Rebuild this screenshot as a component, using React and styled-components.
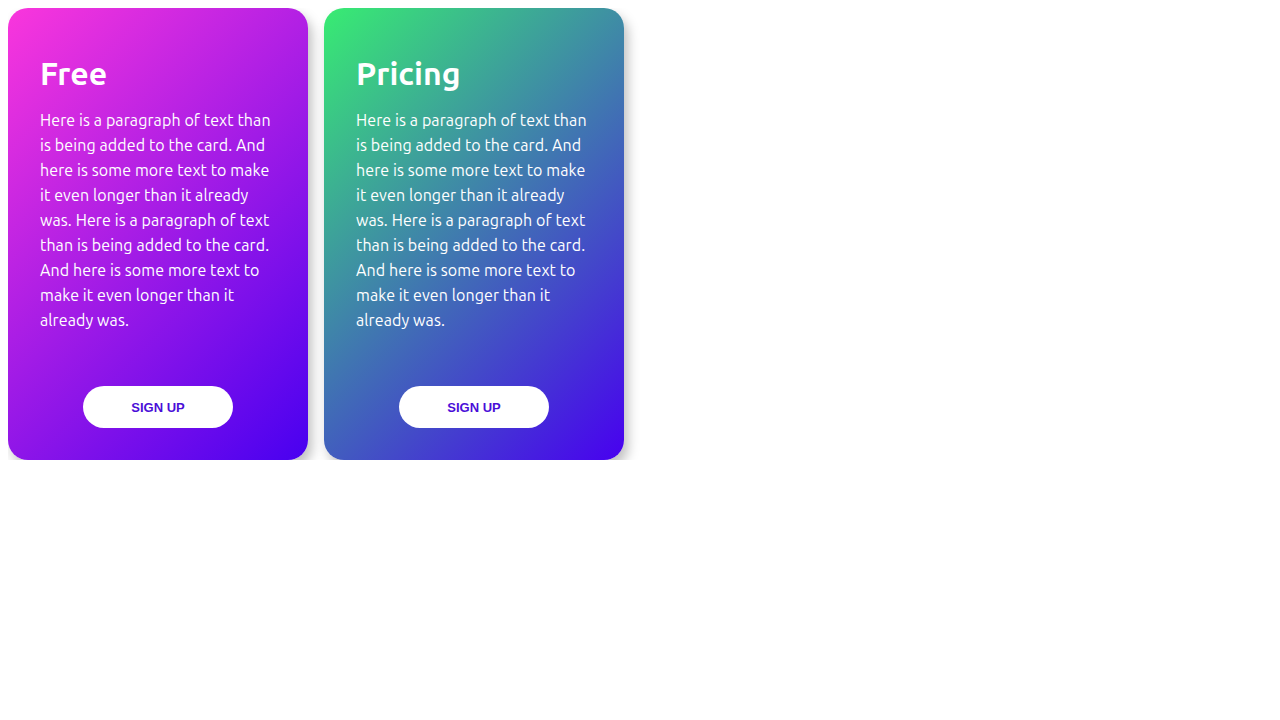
import React from "react";
import styled, { createGlobalStyle } from "styled-components";

const GlobalStyle = createGlobalStyle`
  body {
    margin: 8px;
    background: #ffffff;
    font-family: Ubuntu, Lato, "Liberation Sans", sans-serif;
  }
`;

const text =
  "Here is a paragraph of text than is being added to the card. And here is some more text to make it even longer than it already was. Here is a paragraph of text than is being added to the card. And here is some more text to make it even longer than it already was.";

const cards = [
  { title: "Free", from: "#fa36dc", to: "#4800f0" },
  { title: "Pricing", from: "#38ec72", to: "#4800f0" },
];

const App = () => {
  return (
    <>
      <GlobalStyle />
      <CardRow>
        {cards.map((card) => (
          <Card key={card.title} $from={card.from} $to={card.to}>
            <Title>{card.title}</Title>
            <Body>{text}</Body>
            <ButtonWrapper>
              <SignUp>SIGN UP</SignUp>
            </ButtonWrapper>
          </Card>
        ))}
      </CardRow>
    </>
  );
};

export default App;

const CardRow = styled.div`
  display: flex;
  gap: 16px;
`;

const Card = styled.div`
  box-sizing: border-box;
  width: 300px;
  height: 452px;
  padding: 32px;
  border-radius: 20px;
  display: flex;
  flex-direction: column;
  color: #ffffff;
  background: linear-gradient(135deg, ${(p) => p.$from}, ${(p) => p.$to});
  box-shadow: 4px 7px 12px rgba(0, 0, 0, 0.25);
`;

const Title = styled.h2`
  margin: 13px 0 0;
  font-size: 32px;
  font-weight: 700;
  line-height: 40px;
`;

const Body = styled.p`
  margin: 15px 0 0;
  font-size: 16px;
  line-height: 25px;
  letter-spacing: 0.1px;
`;

const ButtonWrapper = styled.div`
  margin-top: auto;
  display: flex;
  justify-content: center;
`;

const SignUp = styled.button`
  width: 150px;
  height: 42px;
  border: none;
  border-radius: 21px;
  background: #ffffff;
  color: #4a0ed8;
  font-family: "Liberation Sans", Arial, sans-serif;
  font-size: 13px;
  font-weight: 700;
  cursor: pointer;
`;
